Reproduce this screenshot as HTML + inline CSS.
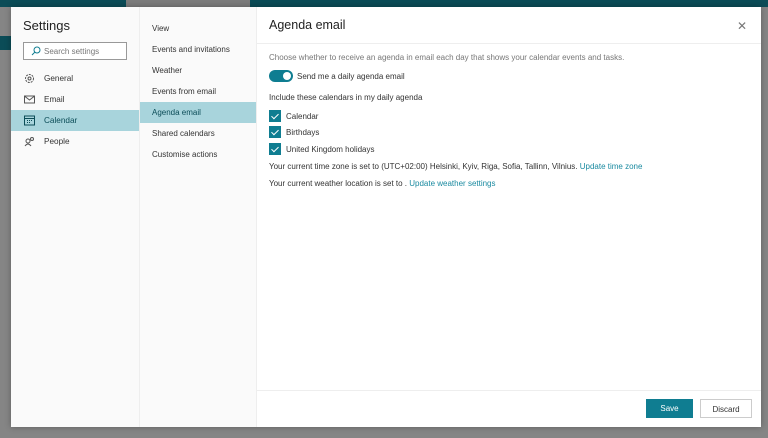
<!DOCTYPE html>
<html><head><style>
*{margin:0;padding:0;box-sizing:border-box}
body{width:768px;height:438px;overflow:hidden;background:#858585;font-family:"Liberation Sans",sans-serif;position:relative;font-size:9px;color:#333}
.top{position:absolute;left:0;top:0;width:768px;height:7px;background:#0b4c57}
.top .s{position:absolute;left:126px;top:0;width:124px;height:7px;background:#7c7c7c}
.bgl{position:absolute;left:0;top:36px;width:11px;height:14px;background:#0b4c57}
.modal{position:absolute;left:11px;top:7px;width:750px;height:420px;background:#fff;box-shadow:0 0 6px rgba(0,0,0,.3)}
.p1{position:absolute;left:0;top:0;width:128px;height:420px;background:#fafafa}
.p2{position:absolute;left:128px;top:0;width:118px;height:420px;background:#fafafa;border-left:1px solid #eee;border-right:1px solid #eee}
h1{position:absolute;left:12px;top:11px;font-size:13px;font-weight:normal;color:#222}
.search{position:absolute;left:12px;top:35px;width:104px;height:18px;border:1px solid #999;background:#fff;color:#777;font-size:8px;padding:4px 0 0 20px}
.search svg{position:absolute;left:7px;top:3px}
.n{position:absolute;left:0;width:128px;height:21px;font-size:8.2px;color:#333;padding:6px 0 0 33px}
.n.sel{background:#a8d4dc;color:#0b4c57}
.n svg{position:absolute;left:13px;top:5px}
.m{position:absolute;left:0;width:116px;height:21px;font-size:8px;color:#333;padding:6px 0 0 12px}
.m.sel{background:#a8d4dc;color:#0b4c57}
.r{position:absolute;left:246px;top:0;width:504px;height:420px}
.r h2{position:absolute;left:12px;top:11px;font-size:12.5px;font-weight:normal;color:#222}
.x{position:absolute;right:14px;top:12px;color:#777;font-size:12px}
.hl{position:absolute;left:0;top:36px;width:504px;border-top:1px solid #eee}
.fl{position:absolute;left:0;top:383px;width:504px;border-top:1px solid #eee}
.t{position:absolute;left:12px;font-size:8px;color:#333;white-space:nowrap}
.g{color:#777}
a{color:#1a8aa0;text-decoration:none}
.tog{position:absolute;left:12px;top:63px;width:24px;height:12px;border-radius:6px;background:#0f7d91}
.tog:after{content:"";position:absolute;right:2px;top:2px;width:8px;height:8px;border-radius:50%;background:#fff}
.cb{position:absolute;left:12px;width:12px;height:12px;background:#0f7d91}
.cb:after{content:"";position:absolute;left:4px;top:2px;width:3px;height:6px;border:solid #fff;border-width:0 1px 1px 0;transform:rotate(45deg)}
.btn{position:absolute;top:392px;height:19px;font-size:8px;text-align:center;padding-top:5px}
</style></head><body>
<div class="top"><div class="s"></div></div>
<div class="bgl"></div>
<div class="modal">
<div class="p1">
<h1>Settings</h1>
<div class="search"><svg width="10" height="10" viewBox="0 0 10 10"><circle cx="6" cy="4" r="3" fill="none" stroke="#0f7d91" stroke-width="1"/><path d="M4 6 L1 9" stroke="#0f7d91" stroke-width="1"/></svg>Search settings</div>
<div class="n" style="top:61px"><svg width="11" height="11" viewBox="0 0 11 11"><circle cx="5.5" cy="5.5" r="4" fill="none" stroke="#555" stroke-dasharray="2 1"/><circle cx="5.5" cy="5.5" r="1.5" fill="none" stroke="#555"/></svg>General</div>
<div class="n" style="top:82px"><svg width="11" height="11" viewBox="0 0 11 11"><rect x="0.5" y="2" width="10" height="7" fill="none" stroke="#555"/><path d="M1 2.5 L5.5 6 L10 2.5" fill="none" stroke="#555"/></svg>Email</div>
<div class="n sel" style="top:103px"><svg width="11" height="11" viewBox="0 0 11 11"><rect x="0.5" y="1" width="10" height="9" fill="none" stroke="#0b4c57"/><path d="M0.5 3.5 H10.5 M3 5.5h1M5 5.5h1M7 5.5h1M3 7.5h1M5 7.5h1" stroke="#0b4c57"/></svg>Calendar</div>
<div class="n" style="top:124px"><svg width="11" height="11" viewBox="0 0 11 11"><circle cx="4" cy="5" r="2" fill="none" stroke="#555"/><path d="M1 10 Q4 6 7 10" fill="none" stroke="#555"/><circle cx="8" cy="3" r="1.5" fill="none" stroke="#555"/></svg>People</div>
</div>
<div class="p2">
<div class="m" style="top:11px">View</div>
<div class="m" style="top:32px">Events and invitations</div>
<div class="m" style="top:53px">Weather</div>
<div class="m" style="top:74px">Events from email</div>
<div class="m sel" style="top:95px">Agenda email</div>
<div class="m" style="top:116px">Shared calendars</div>
<div class="m" style="top:137px">Customise actions</div>
</div>
<div class="r">
<h2>Agenda email</h2><div class="x">✕</div>
<div class="hl"></div>
<div class="t g" style="top:46px">Choose whether to receive an agenda in email each day that shows your calendar events and tasks.</div>
<div class="tog"></div>
<div class="t" style="top:65px;left:40px">Send me a daily agenda email</div>
<div class="t" style="top:86px">Include these calendars in my daily agenda</div>
<div class="cb" style="top:103px"></div><div class="t" style="top:105px;left:29px">Calendar</div>
<div class="cb" style="top:119px"></div><div class="t" style="top:121px;left:29px">Birthdays</div>
<div class="cb" style="top:136px"></div><div class="t" style="top:138px;left:29px">United Kingdom holidays</div>
<div class="t" style="top:155px">Your current time zone is set to (UTC+02:00) Helsinki, Kyiv, Riga, Sofia, Tallinn, Vilnius. <a>Update time zone</a></div>
<div class="t" style="top:172px">Your current weather location is set to . <a>Update weather settings</a></div>
<div class="fl"></div>
<div class="btn" style="left:389px;width:47px;background:#0f7d91;color:#fff">Save</div>
<div class="btn" style="left:443px;width:52px;border:1px solid #ccc;color:#333">Discard</div>
</div>
</div>
</body></html>
